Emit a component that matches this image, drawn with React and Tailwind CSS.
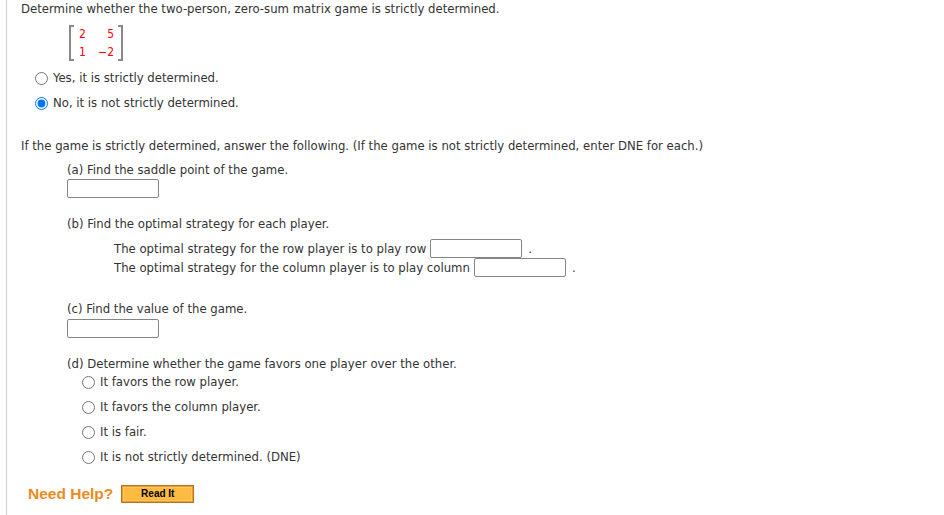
import React from 'react';

const Radio = ({ checked, label }) => (
  <label className="flex items-center h-[18px]">
    <input type="radio" checked={!!checked} readOnly className="m-0 w-[13px] h-[13px]" />
    <span className="ml-[5px]">{label}</span>
  </label>
);

const Blank = () => (
  <div className="w-[92px] h-[19px] border border-[#858585] rounded-[2px] bg-white" />
);

export default function App() {
  return (
    <div className="min-h-[515px] bg-white">
      <div className="ml-[6px] min-h-[515px] border-l border-[#cfcfcf] pl-[14px] text-[13px] text-[#333] font-['DejaVu_Sans_Condensed','DejaVu_Sans',sans-serif]">
        <div className="h-[18px] flex items-center">
          Determine whether the two-person, zero-sum matrix game is strictly determined.
        </div>

        {/* matrix */}
        <div className="mt-[7px] ml-[48px] flex h-[36px] w-[54px]">
          <div className="w-[5px] border-l-2 border-y-2 border-[#8a8a8a]" />
          <div className="grid grid-cols-2 grid-rows-2 flex-1 text-[12px] text-[#ff0000]">
            <span className="flex items-center justify-start pl-[5px]">2</span>
            <span className="flex items-center justify-end pr-[4px]">5</span>
            <span className="flex items-center justify-start pl-[5px]">1</span>
            <span className="flex items-center justify-end pr-[4px]">−2</span>
          </div>
          <div className="w-[5px] border-r-2 border-y-2 border-[#8a8a8a]" />
        </div>

        <div className="mt-[8px] ml-[14px] flex flex-col gap-[7px]">
          <Radio label="Yes, it is strictly determined." />
          <Radio checked label="No, it is not strictly determined." />
        </div>

        <div className="mt-[25px] h-[18px] flex items-center">
          If the game is strictly determined, answer the following. (If the game is not strictly determined, enter DNE for each.)
        </div>

        <div className="ml-[46px]">
          <div className="mt-[6px] h-[18px] flex items-center">(a) Find the saddle point of the game.</div>
          <Blank />

          <div className="mt-[17px] h-[18px] flex items-center">(b) Find the optimal strategy for each player.</div>
          <div className="mt-[6px] ml-[47px] flex flex-col">
            <div className="h-[19px] flex items-center">
              <span>The optimal strategy for the row player is to play row</span>
              <span className="ml-[4px]"><Blank /></span>
              <span className="ml-[6px]">.</span>
            </div>
            <div className="h-[19px] flex items-center">
              <span>The optimal strategy for the column player is to play column</span>
              <span className="ml-[4px]"><Blank /></span>
              <span className="ml-[6px]">.</span>
            </div>
          </div>

          <div className="mt-[23px] h-[18px] flex items-center">(c) Find the value of the game.</div>
          <div className="mt-[1px]"><Blank /></div>

          <div className="mt-[17px] h-[18px] flex items-center">(d) Determine whether the game favors one player over the other.</div>
          <div className="ml-[15px] flex flex-col gap-[7px]">
            <Radio label="It favors the row player." />
            <Radio label="It favors the column player." />
            <Radio label="It is fair." />
            <Radio label="It is not strictly determined. (DNE)" />
          </div>
        </div>

        <div className="mt-[16px] ml-[7px] flex items-center gap-[8px]">
          <span className="font-['Liberation_Sans',Arial,sans-serif] font-bold text-[15.5px] text-[#ec8a1c]">Need Help?</span>
          <button className="w-[73px] h-[18px] border border-[#b5731f] bg-[#f29a2b] p-[1px] flex">
            <span className="flex-1 flex items-center justify-center bg-[#fdbb42] border border-[#f8c866] font-['Liberation_Sans',Arial,sans-serif] font-bold text-[10px] text-black leading-none">
              Read It
            </span>
          </button>
        </div>
      </div>
    </div>
  );
}
